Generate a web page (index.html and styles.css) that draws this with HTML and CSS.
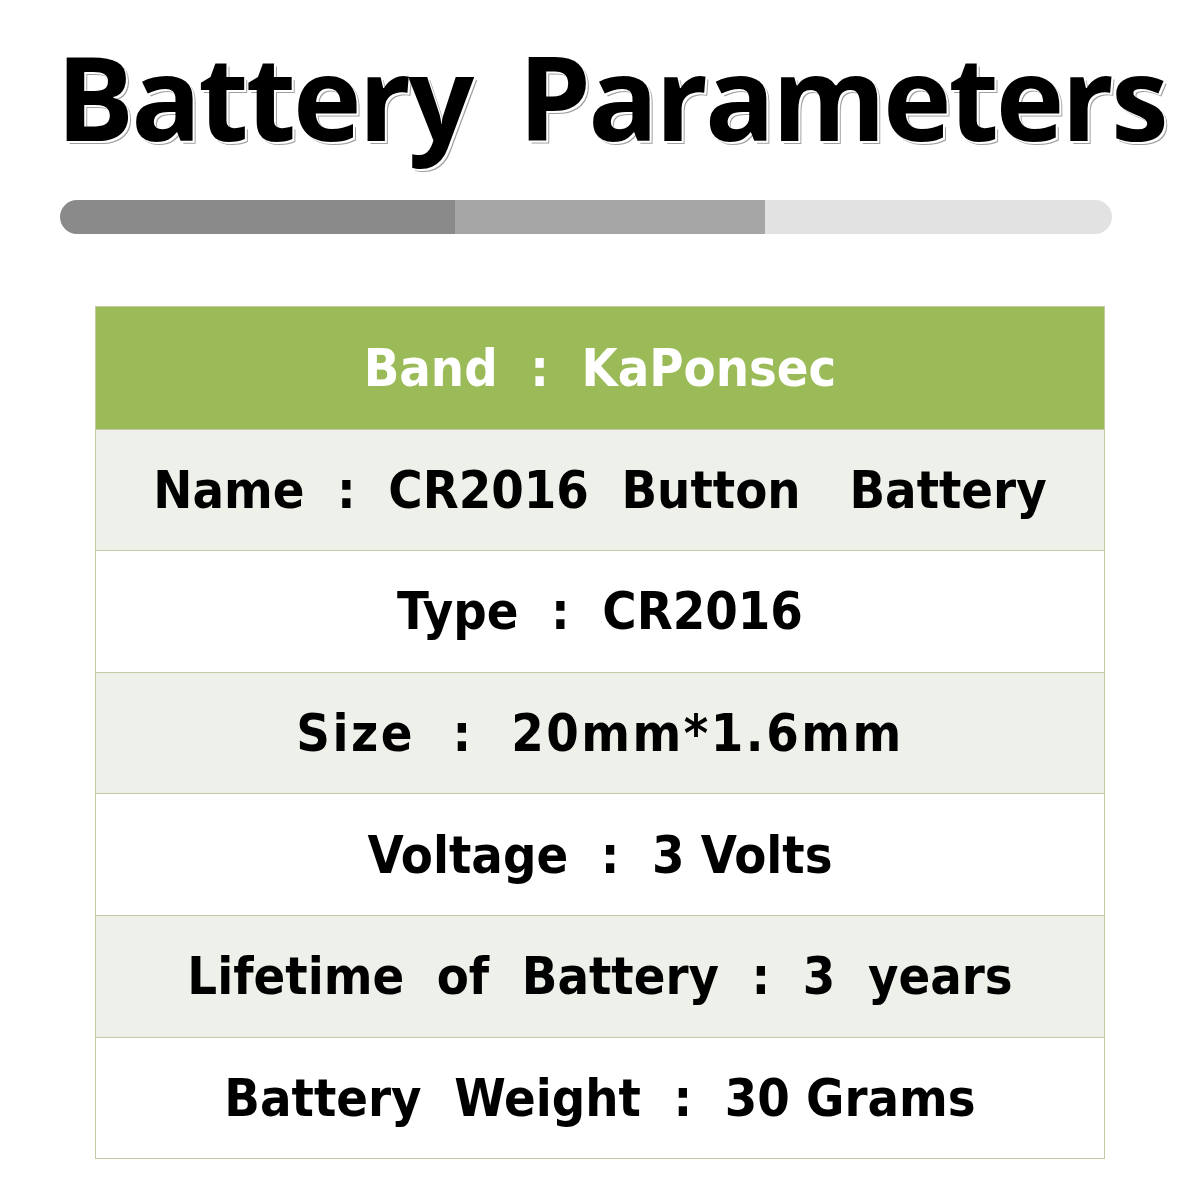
FILE: index.html
```html
<!DOCTYPE html>
<html>
<head>
<meta charset="utf-8">
<link rel="stylesheet" href="styles.css">
</head>
<body>
<div class="page">
  <h1 class="title">Battery Parameters</h1>
  <div class="bar">
    <div class="seg seg-dark"></div>
    <div class="seg seg-mid"></div>
    <div class="seg seg-light"></div>
  </div>
  <div class="table">
    <div class="row head">Band  :  KaPonsec</div>
    <div class="row alt">Name  :  CR2016  Button   Battery</div>
    <div class="row">Type  :  CR2016</div>
    <div class="row alt row-wide">Size  :  20mm*1.6mm</div>
    <div class="row">Voltage  :  3 Volts</div>
    <div class="row alt">Lifetime  of  Battery  :  3  years</div>
    <div class="row">Battery  Weight  :  30 Grams</div>
  </div>
</div>
</body>
</html>
```
FILE: styles.css
```css
html, body {
  margin: 0;
  padding: 0;
  background: #ffffff;
}
.page {
  width: 1200px;
  height: 1200px;
  display: flex;
  flex-direction: column;
  align-items: center;
}
.title {
  margin: 26px 0 0 22px;
  font-family: "Open Sans", "DejaVu Sans", sans-serif;
  font-weight: 700;
  font-size: 116px;
  line-height: 140px;
  color: #000;
  letter-spacing: -3px;
  word-spacing: 20px;
  text-shadow: 1px 1px 0 #fff, 2px 2px 0 #fff, 3px 3px 0 #a0a0a0;
  white-space: nowrap;
}
.bar {
  align-self: flex-start;
  margin: 34px 0 0 60px;
  width: 1052px;
  height: 34px;
  border-radius: 17px;
  overflow: hidden;
  display: flex;
}
.seg { height: 100%; }
.seg-dark { width: 395px; background: #8a8a8a; }
.seg-mid { width: 310px; background: #a6a6a6; }
.seg-light { flex: 1; background: #e2e2e2; }
.table {
  margin-top: 72px;
  box-sizing: border-box;
  width: 1010px;
  border: 1px solid #c4c9a4;
  display: flex;
  flex-direction: column;
}
.row {
  height: 120.6px;
  display: flex;
  align-items: center;
  justify-content: center;
  font-family: "DejaVu Sans Condensed", "DejaVu Sans", sans-serif;
  font-stretch: semi-condensed;
  font-weight: 700;
  font-size: 52px;
  color: #000;
  white-space: pre;
  background: #ffffff;
  border-top: 1px solid #c4c9a4;
}
.row.head {
  border-top: none;
  height: 121.6px;
  background: #9bbb59;
  color: #fff;
}
.row.alt {
  background: #eef1e9;
}
.row.row-wide {
  letter-spacing: 2.5px;
}
```
